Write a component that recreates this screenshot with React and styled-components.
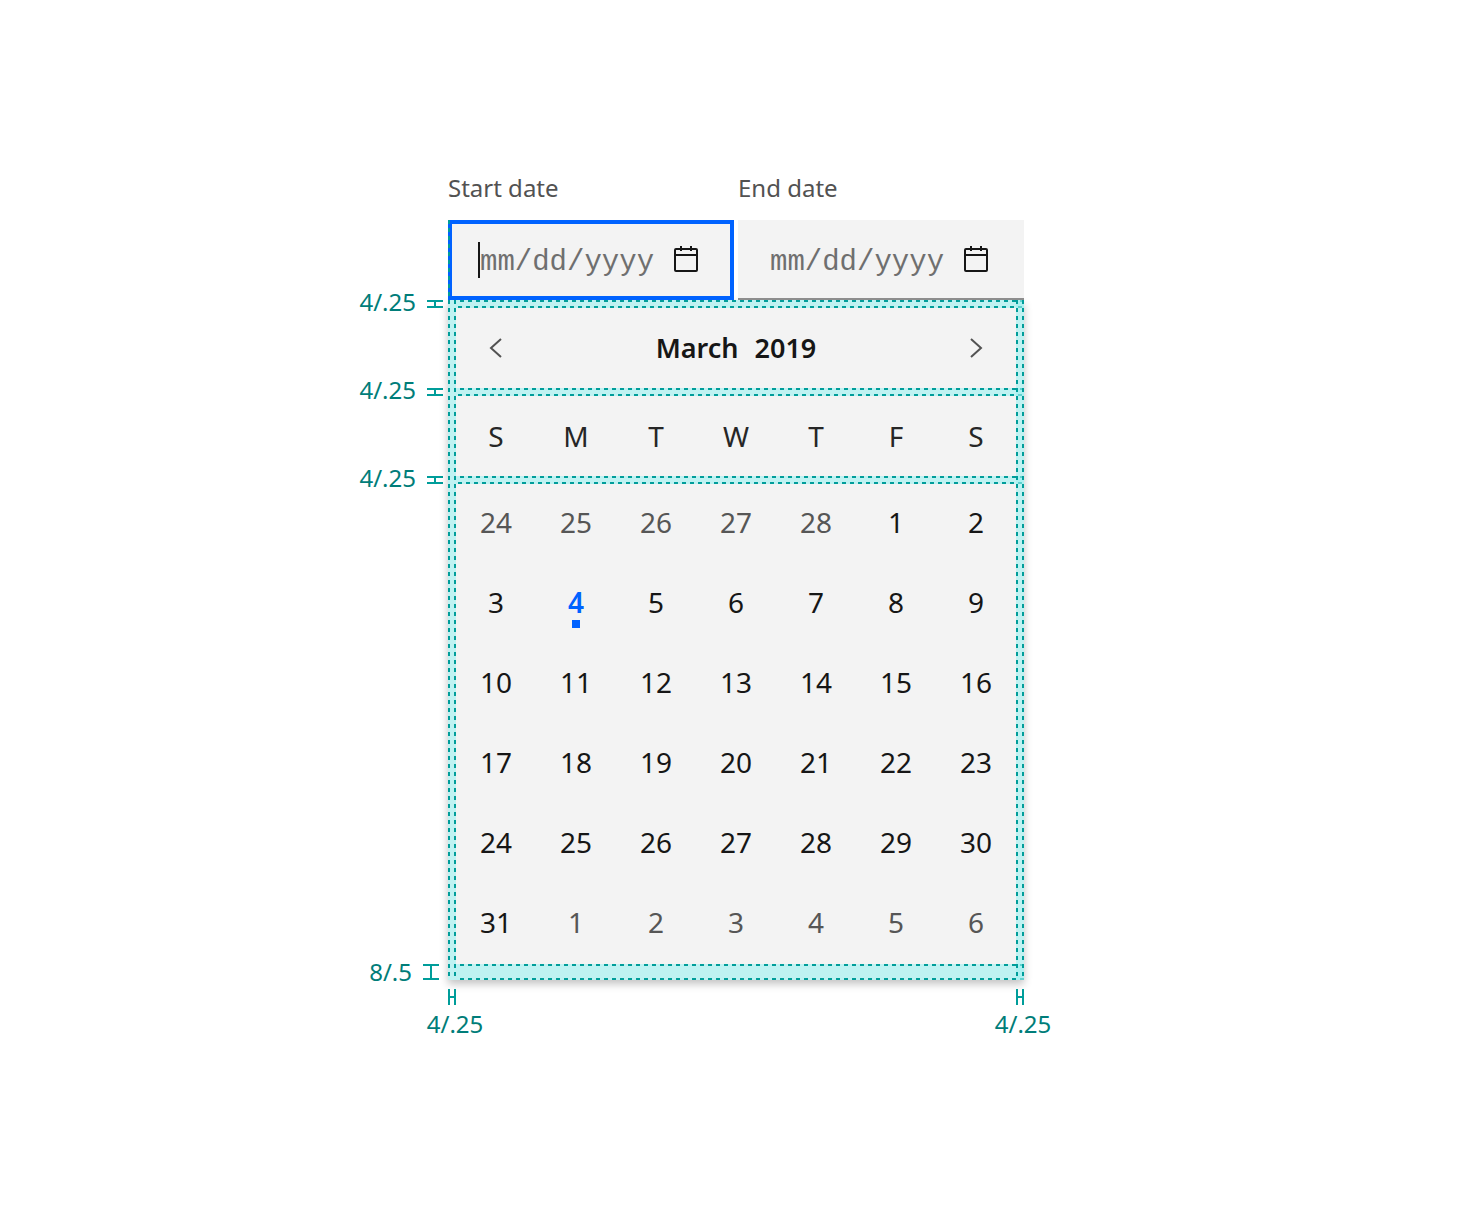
import React from "react";
import styled, { createGlobalStyle } from "styled-components";

const teal = "#009d9a";
const blue = "#0062ff";
const surface = "#f3f3f3";
const tint = "rgba(158, 240, 240, 0.62)";
const rows = "8px 80px 8px 80px 8px 480px 16px";

const dash = (dir, shift = 0) =>
  `repeating-linear-gradient(${dir}, ${teal} ${shift - 8}px ${shift - 4}px, transparent ${shift - 4}px ${shift}px)`;

const GlobalStyle = createGlobalStyle`
  * { box-sizing: border-box; }
  body {
    margin: 0;
    background: #ffffff;
    color: #161616;
    font-family: "Noto Sans", "Open Sans", sans-serif;
  }
  button { font: inherit; color: inherit; }
`;

const Page = styled.main`
  padding: 172px 24px;
  display: grid;
  grid-template-columns: 1fr 576px 1fr;
`;

const Fields = styled.div`
  grid-column: 2;
  z-index: 1;
  display: grid;
  grid-template-columns: repeat(2, minmax(0, 1fr));
  gap: 4px;
`;

const Field = styled.div`
  display: flex;
  flex-direction: column;
  gap: 16px;
`;

const Label = styled.label`
  font-size: 24px;
  line-height: 32px;
  color: #525252;
`;

const Box = styled.div`
  height: 80px;
  display: flex;
  align-items: center;
  padding: 0 31px 0 26px;
  border: 4px solid transparent;
  background: ${(p) =>
    p.$focused
      ? `${dash("to bottom")} 0 0 / 2px 100% no-repeat border-box,
         linear-gradient(${surface}, ${surface}) padding-box, ${blue}`
      : `linear-gradient(#8d8d8d, #8d8d8d) 0 100% / 100% 2px no-repeat border-box, ${surface}`};
`;

const Caret = styled.span`
  width: 2px;
  height: 36px;
  background: ${(p) => (p.$visible ? "#161616" : "transparent")};
`;

const TextInput = styled.input`
  flex: 1;
  min-width: 0;
  padding: 6px 0 0;
  border: 0;
  outline: 0;
  background: transparent;
  font-family: "Liberation Mono", monospace;
  font-size: 29px;
  line-height: 36px;
  color: #161616;
  &::placeholder { color: #6f6f6f; opacity: 1; }
`;

const IconButton = styled.button`
  display: flex;
  padding: 0;
  border: 0;
  background: transparent;
`;

const Panel = styled.section`
  grid-column: 2;
  grid-row: 2;
  display: grid;
  grid-template-columns: 8px 1fr 8px;
  grid-template-rows: ${rows};
  background: ${surface};
  box-shadow: 0 4px 8px rgba(0, 0, 0, 0.24);
`;

const Band = styled.div`
  grid-column: 2 / -1;
  grid-row: ${(p) => p.$row};
  background:
    ${dash("to right", 4)} 0 0 / 100% 2px no-repeat,
    ${(p) => dash("to right", p.$row === 7 ? 4 : 2)} 0 100% / 100% 2px no-repeat,
    ${tint};
`;

const Side = styled.div`
  grid-column: ${(p) => p.$column};
  grid-row: 1 / -1;
  background:
    ${dash("to bottom")} 0 0 / 2px 100% no-repeat,
    ${dash("to bottom")} 100% 0 / 2px 100% no-repeat,
    ${tint};
`;

const MonthBar = styled.header`
  grid-column: 2;
  grid-row: 2;
  display: flex;
  align-items: center;
  justify-content: space-between;
  padding: 0 24px;
`;

const Month = styled.h2`
  margin: 0;
  display: flex;
  gap: 16px;
  font-size: 27px;
  line-height: 36px;
  font-weight: 600;
`;

const Days = styled.table`
  grid-column: 2;
  grid-row: 4 / 7;
  width: 100%;
  height: 568px;
  table-layout: fixed;
  border-collapse: collapse;
  font-size: 28px;
  line-height: 36px;
`;

const Weekday = styled.th`
  height: 88px;
  padding: 0 0 8px;
  font-weight: 400;
  color: #262626;
`;

const DayCell = styled.td`
  height: 80px;
  padding: 0;
`;

const Day = styled.button`
  display: flex;
  flex-direction: column;
  align-items: center;
  width: 100%;
  height: 80px;
  padding: 20px 0 0;
  border: 0;
  background: transparent;
  color: ${(p) => (p.$today ? blue : p.$outside ? "#565656" : "#161616")};
  font-weight: ${(p) => (p.$today ? 600 : 400)};
  &::after {
    content: "";
    width: 8px;
    height: 8px;
    background: ${(p) => (p.$today ? blue : "transparent")};
  }
`;

const Gauges = styled.div`
  grid-column: 1;
  grid-row: 2;
  display: grid;
  grid-template-rows: ${rows};
  justify-items: end;
`;

const GaugeText = styled.span`
  font-size: 24px;
  line-height: 32px;
  color: #007d79;
`;

const Gauge = styled.div`
  grid-row: ${(p) => p.$row};
  height: 100%;
  display: flex;
  align-items: center;
  gap: 11px;
  padding-right: ${(p) => (p.$wide ? "9px" : "5px")};
  ${GaugeText} {
    padding-bottom: ${(p) => (p.$wide ? "0" : "4px")};
  }
`;

const Mark = styled.svg`
  display: block;
  fill: ${teal};
`;

const Feet = styled.div`
  grid-column: 2;
  grid-row: 3;
  display: flex;
  justify-content: space-between;
  padding-top: 9px;
`;

const Foot = styled.div`
  width: 8px;
  display: flex;
  flex-direction: column;
  align-items: center;
  gap: 3px;
  ${GaugeText} {
    padding-left: 6px;
  }
`;

const CalendarIcon = () => (
  <svg width="26" height="28" viewBox="0 0 26 28" fill="none" stroke="#161616" strokeWidth="2" aria-hidden="true">
    <rect x="2" y="3" width="22" height="22" rx="1" />
    <path d="M2 9H24M8 0V5M18 0V5" />
  </svg>
);

const Chevron = ({ flip }) => (
  <svg width="32" height="32" viewBox="0 0 32 32" fill="none" stroke="#525252" strokeWidth="2" aria-hidden="true">
    <path d={flip ? "M11 7L21 16L11 25" : "M21 7L11 16L21 25"} />
  </svg>
);

const RowMark = ({ height }) => (
  <Mark width="16" height={height} aria-hidden="true">
    <path d={`M0 0H16V2H0ZM0 ${height - 2}H16V${height}H0ZM7 0H9V${height}H7Z`} />
  </Mark>
);

const ColumnMark = () => (
  <Mark width="8" height="16" aria-hidden="true">
    <path d="M0 0H2V16H0ZM6 0H8V16H6ZM0 7H8V9H0Z" />
  </Mark>
);

const DateField = ({ id, label, focused }) => (
  <Field>
    <Label htmlFor={id}>{label}</Label>
    <Box $focused={focused}>
      <Caret $visible={focused} />
      <TextInput id={id} type="text" placeholder="mm/dd/yyyy" />
      <IconButton type="button" aria-label={`Open calendar for ${label}`}>
        <CalendarIcon />
      </IconButton>
    </Box>
  </Field>
);

const first = new Date(2019, 1, 24);
const weeks = Array.from({ length: 6 }, (_, w) =>
  Array.from({ length: 7 }, (_, d) => new Date(2019, 1, first.getDate() + w * 7 + d))
);

export default function App() {
  return (
    <>
      <GlobalStyle />
      <Page>
        <Fields>
          <DateField id="start" label="Start date" focused />
          <DateField id="end" label="End date" />
        </Fields>
        <Gauges>
          {[1, 3, 5].map((row) => (
            <Gauge key={row} $row={row}>
              <GaugeText>4/.25</GaugeText>
              <RowMark height={8} />
            </Gauge>
          ))}
          <Gauge $row={7} $wide>
            <GaugeText>8/.5</GaugeText>
            <RowMark height={16} />
          </Gauge>
        </Gauges>
        <Panel>
          <MonthBar>
            <IconButton type="button" aria-label="Previous month"><Chevron /></IconButton>
            <Month><span>March</span><span>2019</span></Month>
            <IconButton type="button" aria-label="Next month"><Chevron flip /></IconButton>
          </MonthBar>
          <Days>
            <thead>
              <tr>
                {["S", "M", "T", "W", "T", "F", "S"].map((d, i) => (
                  <Weekday key={i} scope="col">{d}</Weekday>
                ))}
              </tr>
            </thead>
            <tbody>
              {weeks.map((week, w) => (
                <tr key={w}>
                  {week.map((date) => (
                    <DayCell key={date.getTime()}>
                      <Day
                        type="button"
                        $outside={date.getMonth() !== 2}
                        $today={date.getMonth() === 2 && date.getDate() === 4}
                      >
                        {date.getDate()}
                      </Day>
                    </DayCell>
                  ))}
                </tr>
              ))}
            </tbody>
          </Days>
          {[1, 3, 5, 7].map((row) => <Band key={row} $row={row} />)}
          <Side $column={1} />
          <Side $column={3} />
        </Panel>
        <Feet>
          {["left", "right"].map((side) => (
            <Foot key={side}>
              <ColumnMark />
              <GaugeText>4/.25</GaugeText>
            </Foot>
          ))}
        </Feet>
      </Page>
    </>
  );
}
